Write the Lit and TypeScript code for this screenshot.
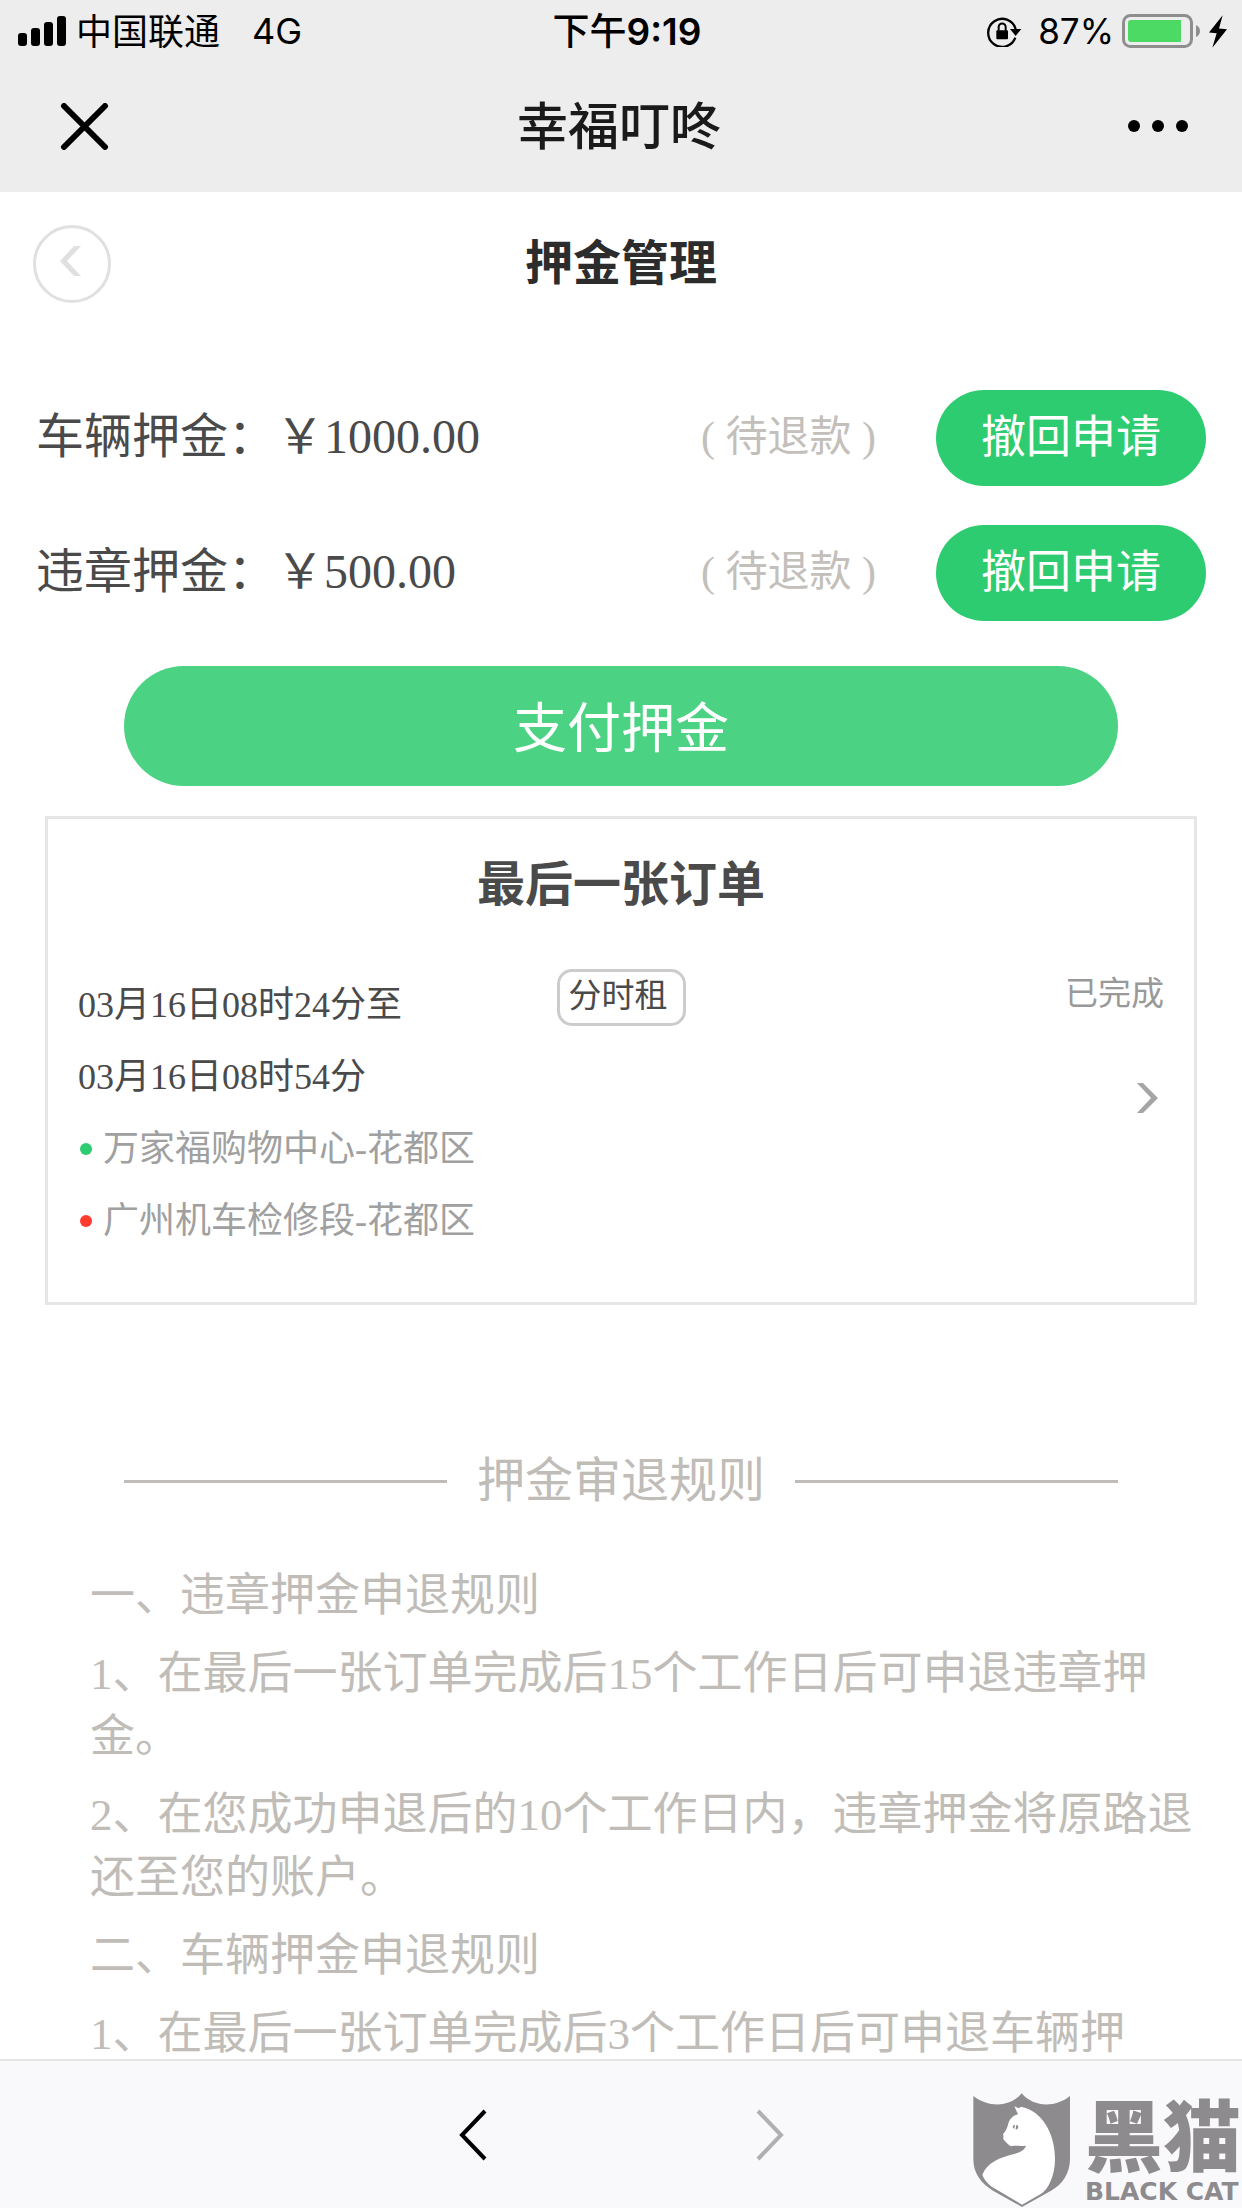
import { LitElement, html, css, svg } from "lit";
import { customElement, property } from "lit/decorators.js";

const deposits = [
  { label: "车辆押金：", amount: "1000.00", status: "待退款" },
  { label: "违章押金：", amount: "500.00", status: "待退款" },
];

const rules = [
  "一、违章押金申退规则",
  "1、在最后一张订单完成后15个工作日后可申退违章押金。",
  "2、在您成功申退后的10个工作日内，违章押金将原路退还至您的账户。",
  "二、车辆押金申退规则",
  "1、在最后一张订单完成后3个工作日后可申退车辆押",
];

@customElement("status-bar")
export class StatusBar extends LitElement {
  static styles = css`
    :host {
      display: grid;
      grid-template-columns: 1fr auto 1fr;
      align-items: center;
      height: 60px;
      padding: 0 15px;
      font: 36px/60px Inter, "Noto Sans CJK SC", sans-serif;
      color: #000;
    }
    .side {
      display: flex;
      align-items: center;
    }
    .signal {
      margin-left: 3px;
    }
    .network {
      margin-left: 32px;
    }
    .carrier {
      margin-left: 9px;
      padding-top: 2px;
    }
    .time {
      padding: 2px 0 0 12px;
      font-size: 37px;
      font-weight: 500;
    }
    .clock {
      font-weight: 600;
    }
    .right {
      justify-content: flex-end;
      font-size: 35px;
    }
    .lock {
      margin-right: 16px;
    }
    .battery {
      margin: 0 8px 0 8px;
    }
    svg {
      display: block;
    }
  `;

  render() {
    return html`
      <div class="side">
        <svg class="signal" width="49" height="30" viewBox="0 0 49 30" aria-hidden="true">
          ${[17, 12, 6, 0].map(
            (y, i) => svg`<rect x=${i * 13} y=${y} width="9" height=${30 - y} rx="3" />`
          )}
        </svg>
        <span class="carrier">中国联通</span>
        <span class="network">4G</span>
      </div>
      <span class="time">下午<span class="clock">9:19</span></span>
      <div class="side right">
        <svg class="lock" width="35" height="31" viewBox="0 0 105 93" aria-hidden="true">
          <path d="M85 65A42 42 0 1 1 86 39" fill="none" stroke="#000" stroke-width="7" />
          <path d="M69 39H103L86 60Z" />
          <rect x="28" y="43" width="35" height="27" rx="3" />
          <path d="M35 44V33a10.500 10.500 0 0 1 21 0V44" fill="none" stroke="#000" stroke-width="6" />
        </svg>
        <span>87%</span>
        <svg class="battery" width="79" height="34" viewBox="0 0 79 34" aria-hidden="true">
          <rect x="1.500" y="1.500" width="68" height="31" rx="7" fill="none" stroke="#8e8e8e" stroke-width="3" />
          <path d="M9 6H59V28H9a3 3 0 0 1-3-3V9a3 3 0 0 1 3-3Z" fill="#4cd964" />
          <path d="M74 11q4 2 4 6t-4 6Z" fill="#8e8e8e" />
        </svg>
        <svg width="18" height="33" viewBox="0 0 54 98" aria-hidden="true">
          <path d="M41 0 0 52 23 54 10 98 54 42 30 40Z" />
        </svg>
      </div>
    `;
  }
}

@customElement("nav-bar")
export class NavBar extends LitElement {
  static styles = css`
    :host {
      display: grid;
      grid-template-columns: 1fr auto 1fr;
      align-items: center;
      height: 132px;
      padding: 0 52px;
    }
    h1 {
      margin: 0;
      padding: 2px 4px 0 0;
      font: 500 51px/72px Inter, "Noto Sans CJK SC", sans-serif;
      color: #1a1a1a;
    }
    button {
      display: block;
      padding: 0;
      border: 0;
      background: none;
    }
    .close {
      padding-left: 8px;
      justify-self: start;
    }
    .more {
      justify-self: end;
    }
    svg {
      display: block;
    }
  `;

  render() {
    return html`
      <button class="close" aria-label="关闭">
        <svg width="49" height="47" viewBox="0 0 49 47">
          <path d="M4 3 45 44M45 3 4 44" stroke="#000" stroke-width="6" stroke-linecap="round" />
        </svg>
      </button>
      <h1>幸福叮咚</h1>
      <button class="more" aria-label="更多">
        <svg width="64" height="14" viewBox="0 0 64 14">
          <circle cx="8" cy="7" r="6" />
          <circle cx="32" cy="7" r="6" />
          <circle cx="56" cy="7" r="6" />
        </svg>
      </button>
    `;
  }
}

@customElement("deposit-row")
export class DepositRow extends LitElement {
  @property() label = "";
  @property() amount = "";
  @property() status = "";

  static styles = css`
    :host {
      display: flex;
      align-items: center;
      height: 96px;
      font-size: 48px;
      line-height: 72px;
      color: #4a4a4a;
    }
    span {
      padding-bottom: 3px;
    }
    .status {
      margin-left: auto;
      margin-right: 60px;
      font-size: 42px;
      color: #c3bfbb;
    }
    button {
      width: 270px;
      height: 96px;
      padding: 0;
      border: 0;
      border-radius: 48px;
      background: #2ecc71;
      color: #fff;
      font: inherit;
      font-size: 45px;
    }
  `;

  render() {
    return html`
      <span>${this.label}￥${this.amount}</span>
      <span class="status">( ${this.status} )</span>
      <button>撤回申请</button>
    `;
  }
}

@customElement("order-card")
export class OrderCard extends LitElement {
  static styles = css`
    :host {
      display: block;
      border: 3px solid #e6e6e6;
      padding: 30px 30px 45px;
      color: #4a4a4a;
    }
    h3 {
      margin: 0 0 48px;
      font-size: 48px;
      line-height: 72px;
      text-align: center;
    }
    .body {
      display: grid;
      grid-template-columns: 1fr auto 1fr;
      align-items: start;
    }
    .trip {
      margin: 0;
      padding: 0;
      list-style: none;
      font-size: 36px;
      line-height: 72px;
      white-space: nowrap;
    }
    .place {
      display: flex;
      align-items: center;
      gap: 11px;
      padding-left: 2px;
      color: #a0a0a0;
    }
    .place::before {
      content: "";
      width: 12px;
      height: 12px;
      border-radius: 50%;
      background: #2ecc71;
    }
    .place.end::before {
      background: #ff3b30;
    }
    .tag {
      padding: 0 15px 3px 9px;
      border: 3px solid #ccc;
      border-radius: 15px;
      font-size: 33px;
      line-height: 48px;
    }
    .state {
      display: flex;
      flex-direction: column;
      align-items: flex-end;
      padding-top: 1px;
      font-size: 33px;
      line-height: 48px;
      color: #999;
    }
    .state svg {
      margin: 65px 6px 0 0;
    }
  `;

  render() {
    return html`
      <h3>最后一张订单</h3>
      <div class="body">
        <ul class="trip">
          <li>03月16日08时24分至</li>
          <li>03月16日08时54分</li>
          <li class="place">万家福购物中心-花都区</li>
          <li class="place end">广州机车检修段-花都区</li>
        </ul>
        <span class="tag">分时租</span>
        <div class="state">
          <span>已完成</span>
          <svg width="22" height="30" viewBox="0 0 22 30" aria-hidden="true">
            <path d="M1 0H7L22 15 7 30H1L15 15Z" fill="#a5a5a5" />
          </svg>
        </div>
      </div>
    `;
  }
}

@customElement("tool-bar")
export class ToolBar extends LitElement {
  static styles = css`
    :host {
      position: relative;
      display: flex;
      justify-content: center;
      align-items: center;
      gap: 267px;
      height: 147px;
      border-top: 2px solid #e5e5e5;
      background: #f9f9fb;
    }
    button {
      display: block;
      padding: 0;
      border: 0;
      background: none;
    }
    svg {
      display: block;
    }
    .badge {
      position: absolute;
      right: 1px;
      bottom: 0;
      display: flex;
      align-items: flex-start;
      gap: 5px;
      color: #8e8b8e;
    }
    .words {
      display: flex;
      flex-direction: column;
      padding-top: 2px;
    }
    .cn {
      font: 900 78px/90px "Noto Sans CJK SC", sans-serif;
    }
    .en {
      font: bold 25px/30px "DejaVu Sans", sans-serif;
      white-space: nowrap;
    }
  `;

  render() {
    return html`
      <button aria-label="后退">
        <svg width="30" height="54" viewBox="0 0 30 54">
          <path d="M27 3 4 27 27 51" fill="none" stroke="#000" stroke-width="4" />
        </svg>
      </button>
      <button aria-label="前进" disabled>
        <svg width="30" height="54" viewBox="0 0 30 54">
          <path d="M3 3 26 27 3 51" fill="none" stroke="#b0b0b0" stroke-width="4" />
        </svg>
      </button>
      <div class="badge">
        <svg width="115" height="123" viewBox="0 0 345 369" aria-hidden="true">
          <path
            d="M25 33C70 68 135 68 170 25C206 68 272 68 315 33V222C315 262 294 298 258 317L171 366L84 317C45 293 25 262 25 222Z"
            fill="#8e8b8e"
          />
          <path
            d="M148 64 162 70 168 65C230 76 271 145 270 224C269 270 252 312 226 328L171 359L88 310C70 299 57 284 52 269C66 233 103 217 150 206C169 201 180 192 183 182C166 184 148 181 139 184C131 181 121 170 115 162C114 157 117 153 114 148C125 136 128 124 131 112C136 99 146 91 159 88Z"
            fill="#fff"
          />
          <path d="M143 124q3-5 7-5l-2 13q-5-2-5-8ZM154 119q7 2 6 8-2 7-8 7Z" fill="#8e8b8e" />
        </svg>
        <div class="words">
          <span class="cn">黑猫</span>
          <span class="en">BLACK CAT</span>
        </div>
      </div>
    `;
  }
}

@customElement("app-root")
export class AppRoot extends LitElement {
  static styles = css`
    :host {
      display: flex;
      flex-direction: column;
      height: 100vh;
      background: #fff;
      font-family: "Liberation Serif", "Noto Sans CJK SC", serif;
    }
    .top {
      flex: none;
      background: #ededed;
    }
    .content {
      flex: 1;
      min-height: 0;
      overflow: hidden;
    }
    .header {
      display: grid;
      grid-template-columns: 1fr auto 1fr;
      align-items: center;
      padding: 33px;
    }
    .back {
      display: grid;
      place-items: center;
      width: 78px;
      height: 78px;
      padding: 0 4px 6px 0;
      border: 3px solid #e0e0e0;
      border-radius: 50%;
      background: none;
    }
    h2 {
      margin: 0;
      font-size: 48px;
      line-height: 72px;
      color: #2c2c2c;
    }
    .deposits {
      display: flex;
      flex-direction: column;
      gap: 39px;
      padding: 54px 36px 45px;
    }
    .pay {
      display: block;
      width: 80%;
      height: 120px;
      margin: 0 auto 30px;
      padding: 0 0 3px;
      border: 0;
      border-radius: 60px;
      background: #4bd383;
      color: #fff;
      font: inherit;
      font-size: 54px;
    }
    order-card {
      margin: 0 45px;
    }
    .rules-title {
      display: flex;
      align-items: center;
      gap: 30px;
      width: 80%;
      margin: 140px auto 48px;
      color: #c0bcb8;
    }
    .rules-title::before,
    .rules-title::after {
      content: "";
      flex: 1;
      height: 3px;
      background: #c0bcb8;
    }
    .rules-title h3 {
      margin: 0;
      font-size: 48px;
      font-weight: normal;
      line-height: 72px;
    }
    .rules {
      padding: 0 45px 0 90px;
      font-size: 45px;
      line-height: 63px;
      color: #c0bcb8;
    }
    .rules p {
      margin: 0 0 15px;
    }
    tool-bar {
      flex: none;
    }
  `;

  render() {
    return html`
      <div class="top">
        <status-bar></status-bar>
        <nav-bar></nav-bar>
      </div>
      <main class="content">
        <header class="header">
          <button class="back" aria-label="返回">
            <svg width="21" height="30" viewBox="0 0 21 30">
              <path d="M21 0H14L0 15 14 30H21L7 15Z" fill="#e0e0e0" />
            </svg>
          </button>
          <h2>押金管理</h2>
        </header>
        <section class="deposits">
          ${deposits.map(
            (d) => html`<deposit-row label=${d.label} amount=${d.amount} status=${d.status}></deposit-row>`
          )}
        </section>
        <button class="pay">支付押金</button>
        <order-card></order-card>
        <div class="rules-title"><h3>押金审退规则</h3></div>
        <section class="rules">${rules.map((r) => html`<p>${r}</p>`)}</section>
      </main>
      <tool-bar></tool-bar>
    `;
  }
}
